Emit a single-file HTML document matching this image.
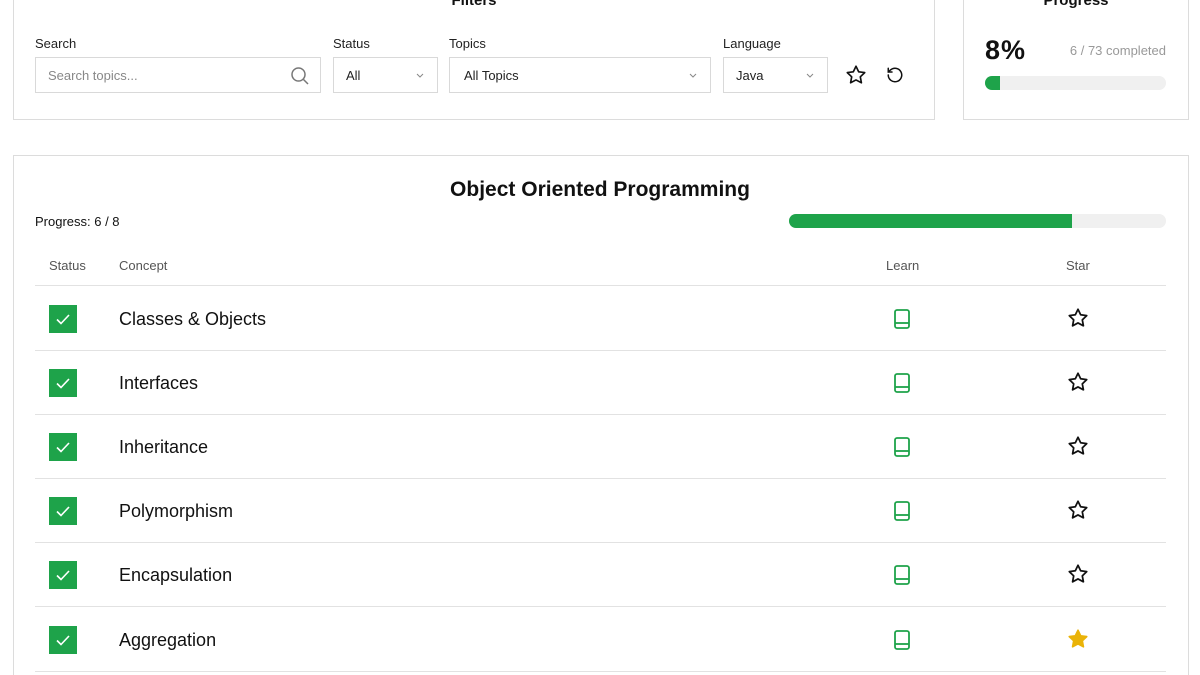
<!DOCTYPE html>
<html><head><meta charset="utf-8"><style>
*{box-sizing:border-box;margin:0;padding:0}
html,body{width:1200px;height:675px;overflow:hidden}
body{background:#fff;font-family:"Liberation Sans",sans-serif;color:#111;position:relative}
#w{position:absolute;left:0;top:0;width:1200px;height:675px;overflow:hidden}
.box{position:absolute;border:1px solid #dcdcdc;background:#fff}
.abs{position:absolute}
.lbl{position:absolute;font-size:13px;color:#222}
.inp{position:absolute;border:1px solid #d9d9d9;height:36px;font-size:13px;display:flex;align-items:center;padding-left:12px;color:#222}
.chev{position:absolute;right:12px;top:12px}
.row{position:absolute;left:35px;width:1131px;height:64px;border-bottom:1px solid #e2e2e2}
.cb{position:absolute;left:14px;top:18px;width:28px;height:28px;background:#1ea34a}
.name{position:absolute;left:84px;top:22px;font-size:18px;color:#111}
.bk{position:absolute;left:858px;top:21px}
.st{position:absolute;left:1032px;top:20px}
</style></head><body><div id="w">
<div class="box" style="left:13px;top:-20px;width:922px;height:140px"></div>
<div class="abs" style="left:0;width:948px;top:-8px;text-align:center;font-size:15px;font-weight:bold">Filters</div>
<div class="lbl" style="left:35px;top:36px">Search</div>
<div class="inp" style="left:35px;top:57px;width:286px;color:#888">Search topics...
<svg class="chev" style="top:8px;right:10px" width="20" height="20" viewBox="0 0 20 20" fill="none" stroke="#777" stroke-width="1.5"><circle cx="8.5" cy="8.5" r="6.5"/><path d="M13.5 13.5L18 18"/></svg></div>
<div class="lbl" style="left:333px;top:36px">Status</div>
<div class="inp" style="left:333px;top:57px;width:105px">All<svg class="chev" width="10" height="10" viewBox="0 0 10 10" fill="none" stroke="#888"><path d="M2 4l3 3 3-3"/></svg></div>
<div class="lbl" style="left:449px;top:36px">Topics</div>
<div class="inp" style="left:449px;top:57px;width:262px;padding-left:14px">All Topics<svg class="chev" width="10" height="10" viewBox="0 0 10 10" fill="none" stroke="#888"><path d="M2 4l3 3 3-3"/></svg></div>
<div class="lbl" style="left:723px;top:36px">Language</div>
<div class="inp" style="left:723px;top:57px;width:105px">Java<svg class="chev" width="10" height="10" viewBox="0 0 10 10" fill="none" stroke="#888"><path d="M2 4l3 3 3-3"/></svg></div>
<svg class="abs" style="left:845px;top:64px" width="22" height="22" viewBox="0 0 24 24" fill="none" stroke="#111" stroke-width="1.8" stroke-linejoin="round"><path d="M12 2.5l2.9 6 6.6.9-4.8 4.6 1.2 6.5L12 17.4 6.1 20.5l1.2-6.5L2.5 9.4l6.6-.9z"/></svg>
<svg class="abs" style="left:886px;top:66px" width="18" height="18" viewBox="0 0 24 24" fill="none" stroke="#111" stroke-width="2" stroke-linecap="round"><path d="M3 12a9 9 0 1 0 3-6.7L3 8"/><path d="M3 3v5h5"/></svg>

<div class="box" style="left:963px;top:-20px;width:226px;height:140px"></div>
<div class="abs" style="left:963px;width:226px;top:-8px;text-align:center;font-size:15px;font-weight:bold">Progress</div>
<div class="abs" style="left:985px;top:35px;font-size:27px;font-weight:bold;letter-spacing:1px">8%</div>
<div class="abs" style="left:1040px;width:126px;text-align:right;top:43px;font-size:13px;color:#999">6 / 73 completed</div>
<div class="abs" style="left:985px;top:76px;width:181px;height:14px;border-radius:7px;background:#f0f0f0"><div style="width:15px;height:14px;border-radius:7px 0 0 7px;background:#1ea34a"></div></div>

<div class="box" style="left:13px;top:155px;width:1176px;height:520px;border-bottom:none"></div>
<div class="abs" style="left:0;width:1200px;top:178px;text-align:center;font-size:21px;font-weight:bold">Object Oriented Programming</div>
<div class="abs" style="left:35px;top:214px;font-size:13px">Progress: 6 / 8</div>
<div class="abs" style="left:789px;top:214px;width:377px;height:14px;border-radius:7px;background:#f0f0f0"><div style="width:283px;height:14px;border-radius:7px 0 0 7px;background:#1ea34a"></div></div>
<div class="row" style="top:222px"></div>
<div class="abs" style="left:49px;top:258px;font-size:13px;color:#555">Status</div>
<div class="abs" style="left:119px;top:258px;font-size:13px;color:#555">Concept</div>
<div class="abs" style="left:886px;top:258px;font-size:13px;color:#555">Learn</div>
<div class="abs" style="left:1066px;top:258px;font-size:13px;color:#555">Star</div>

<div class="row" style="top:287px"><div class="cb"><svg width="28" height="28" viewBox="0 0 28 28" fill="none" stroke="#fff" stroke-width="1.6"><path d="M8 14.5l4 4 8-8.5"/></svg></div><div class="name">Classes &amp; Objects</div><svg class="bk" width="18" height="22" viewBox="0 0 18 22" fill="none" stroke="#1ea34a" stroke-width="1.8"><rect x="2" y="2" width="14" height="18" rx="2"/><path d="M2 15h14"/></svg><svg class="st" width="22" height="22" viewBox="0 0 24 24" fill="none" stroke="#111" stroke-width="1.9" stroke-linejoin="round"><path d="M12 2.5l2.9 6 6.6.9-4.8 4.6 1.2 6.5L12 17.4 6.1 20.5l1.2-6.5L2.5 9.4l6.6-.9z"/></svg></div>
<div class="row" style="top:351px"><div class="cb"><svg width="28" height="28" viewBox="0 0 28 28" fill="none" stroke="#fff" stroke-width="1.6"><path d="M8 14.5l4 4 8-8.5"/></svg></div><div class="name">Interfaces</div><svg class="bk" width="18" height="22" viewBox="0 0 18 22" fill="none" stroke="#1ea34a" stroke-width="1.8"><rect x="2" y="2" width="14" height="18" rx="2"/><path d="M2 15h14"/></svg><svg class="st" width="22" height="22" viewBox="0 0 24 24" fill="none" stroke="#111" stroke-width="1.9" stroke-linejoin="round"><path d="M12 2.5l2.9 6 6.6.9-4.8 4.6 1.2 6.5L12 17.4 6.1 20.5l1.2-6.5L2.5 9.4l6.6-.9z"/></svg></div>
<div class="row" style="top:415px"><div class="cb"><svg width="28" height="28" viewBox="0 0 28 28" fill="none" stroke="#fff" stroke-width="1.6"><path d="M8 14.5l4 4 8-8.5"/></svg></div><div class="name">Inheritance</div><svg class="bk" width="18" height="22" viewBox="0 0 18 22" fill="none" stroke="#1ea34a" stroke-width="1.8"><rect x="2" y="2" width="14" height="18" rx="2"/><path d="M2 15h14"/></svg><svg class="st" width="22" height="22" viewBox="0 0 24 24" fill="none" stroke="#111" stroke-width="1.9" stroke-linejoin="round"><path d="M12 2.5l2.9 6 6.6.9-4.8 4.6 1.2 6.5L12 17.4 6.1 20.5l1.2-6.5L2.5 9.4l6.6-.9z"/></svg></div>
<div class="row" style="top:479px"><div class="cb"><svg width="28" height="28" viewBox="0 0 28 28" fill="none" stroke="#fff" stroke-width="1.6"><path d="M8 14.5l4 4 8-8.5"/></svg></div><div class="name">Polymorphism</div><svg class="bk" width="18" height="22" viewBox="0 0 18 22" fill="none" stroke="#1ea34a" stroke-width="1.8"><rect x="2" y="2" width="14" height="18" rx="2"/><path d="M2 15h14"/></svg><svg class="st" width="22" height="22" viewBox="0 0 24 24" fill="none" stroke="#111" stroke-width="1.9" stroke-linejoin="round"><path d="M12 2.5l2.9 6 6.6.9-4.8 4.6 1.2 6.5L12 17.4 6.1 20.5l1.2-6.5L2.5 9.4l6.6-.9z"/></svg></div>
<div class="row" style="top:543px"><div class="cb"><svg width="28" height="28" viewBox="0 0 28 28" fill="none" stroke="#fff" stroke-width="1.6"><path d="M8 14.5l4 4 8-8.5"/></svg></div><div class="name">Encapsulation</div><svg class="bk" width="18" height="22" viewBox="0 0 18 22" fill="none" stroke="#1ea34a" stroke-width="1.8"><rect x="2" y="2" width="14" height="18" rx="2"/><path d="M2 15h14"/></svg><svg class="st" width="22" height="22" viewBox="0 0 24 24" fill="none" stroke="#111" stroke-width="1.9" stroke-linejoin="round"><path d="M12 2.5l2.9 6 6.6.9-4.8 4.6 1.2 6.5L12 17.4 6.1 20.5l1.2-6.5L2.5 9.4l6.6-.9z"/></svg></div>
<div class="row" style="top:608px"><div class="cb"><svg width="28" height="28" viewBox="0 0 28 28" fill="none" stroke="#fff" stroke-width="1.6"><path d="M8 14.5l4 4 8-8.5"/></svg></div><div class="name">Aggregation</div><svg class="bk" width="18" height="22" viewBox="0 0 18 22" fill="none" stroke="#1ea34a" stroke-width="1.8"><rect x="2" y="2" width="14" height="18" rx="2"/><path d="M2 15h14"/></svg><svg class="st" width="22" height="22" viewBox="0 0 24 24" fill="#eab308" stroke="#eab308" stroke-width="1.8" stroke-linejoin="round"><path d="M12 2.5l2.9 6 6.6.9-4.8 4.6 1.2 6.5L12 17.4 6.1 20.5l1.2-6.5L2.5 9.4l6.6-.9z"/></svg></div>
</div></body></html>
